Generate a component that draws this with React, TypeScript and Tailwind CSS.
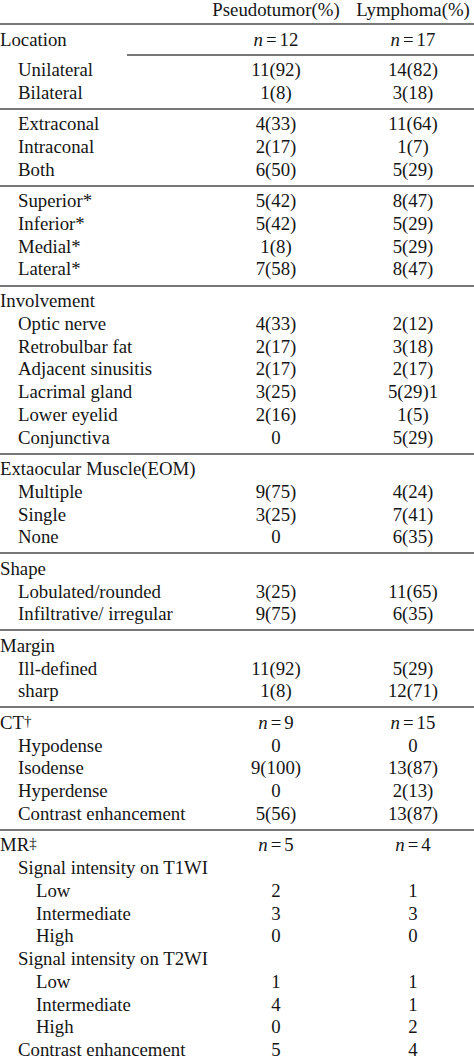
type Row = { label: React.ReactNode; a?: React.ReactNode; b?: React.ReactNode; indent?: 0 | 1 | 2 };

const N = ({ v }: { v: number }) => (
  <span>
    <i>n</i>
    <span className="mx-[3px]">=</span>
    {v}
  </span>
);

const groups: Row[][] = [
  [
    { label: "Extraconal", a: "4(33)", b: "11(64)", indent: 1 },
    { label: "Intraconal", a: "2(17)", b: "1(7)", indent: 1 },
    { label: "Both", a: "6(50)", b: "5(29)", indent: 1 },
  ],
  [
    { label: "Superior*", a: "5(42)", b: "8(47)", indent: 1 },
    { label: "Inferior*", a: "5(42)", b: "5(29)", indent: 1 },
    { label: "Medial*", a: "1(8)", b: "5(29)", indent: 1 },
    { label: "Lateral*", a: "7(58)", b: "8(47)", indent: 1 },
  ],
  [
    { label: "Involvement" },
    { label: "Optic nerve", a: "4(33)", b: "2(12)", indent: 1 },
    { label: "Retrobulbar fat", a: "2(17)", b: "3(18)", indent: 1 },
    { label: "Adjacent sinusitis", a: "2(17)", b: "2(17)", indent: 1 },
    { label: "Lacrimal gland", a: "3(25)", b: "5(29)1", indent: 1 },
    { label: "Lower eyelid", a: "2(16)", b: "1(5)", indent: 1 },
    { label: "Conjunctiva", a: "0", b: "5(29)", indent: 1 },
  ],
  [
    { label: "Extaocular Muscle(EOM)" },
    { label: "Multiple", a: "9(75)", b: "4(24)", indent: 1 },
    { label: "Single", a: "3(25)", b: "7(41)", indent: 1 },
    { label: "None", a: "0", b: "6(35)", indent: 1 },
  ],
  [
    { label: "Shape" },
    { label: "Lobulated/rounded", a: "3(25)", b: "11(65)", indent: 1 },
    { label: "Infiltrative/ irregular", a: "9(75)", b: "6(35)", indent: 1 },
  ],
  [
    { label: "Margin" },
    { label: "Ill-defined", a: "11(92)", b: "5(29)", indent: 1 },
    { label: "sharp", a: "1(8)", b: "12(71)", indent: 1 },
  ],
  [
    {
      label: (
        <span>
          CT<sup className="text-[15px] relative -top-[3px]">†</sup>
        </span>
      ),
      a: <N v={9} />,
      b: <N v={15} />,
    },
    { label: "Hypodense", a: "0", b: "0", indent: 1 },
    { label: "Isodense", a: "9(100)", b: "13(87)", indent: 1 },
    { label: "Hyperdense", a: "0", b: "2(13)", indent: 1 },
    { label: "Contrast enhancement", a: "5(56)", b: "13(87)", indent: 1 },
  ],
  [
    {
      label: (
        <span>
          MR<sup className="text-[15px] relative -top-[3px]">‡</sup>
        </span>
      ),
      a: <N v={5} />,
      b: <N v={4} />,
    },
    { label: "Signal intensity on T1WI", indent: 1 },
    { label: "Low", a: "2", b: "1", indent: 2 },
    { label: "Intermediate", a: "3", b: "3", indent: 2 },
    { label: "High", a: "0", b: "0", indent: 2 },
    { label: "Signal intensity on T2WI", indent: 1 },
    { label: "Low", a: "1", b: "1", indent: 2 },
    { label: "Intermediate", a: "4", b: "1", indent: 2 },
    { label: "High", a: "0", b: "2", indent: 2 },
    { label: "Contrast enhancement", a: "5", b: "4", indent: 1 },
  ],
];

function TRow({ label, a, b, indent = 0 }: Row) {
  const pad = indent === 2 ? "pl-[36px]" : indent === 1 ? "pl-[18px]" : "pl-0";
  return (
    <div className="grid grid-cols-[200px_152px_122px] h-[22.75px] leading-[22.75px] whitespace-nowrap">
      <div className={pad}>{label}</div>
      <div className="text-center">{a}</div>
      <div className="text-center">{b}</div>
    </div>
  );
}

const Rule = () => <div className="h-[2px] bg-[#777777]" />;

export default function App() {
  return (
    <div
      className="w-[474px] h-[1060px] overflow-hidden bg-white text-[#151515] text-[18.8px]"
      style={{ fontFamily: '"Liberation Serif", "Times New Roman", serif' }}
    >
      {/* header */}
      <div className="grid grid-cols-[200px_152px_122px] h-[19.8px] leading-[19.8px] mb-[3.6px] whitespace-nowrap">
        <div />
        <div className="text-center">Pseudotumor(%)</div>
        <div className="text-center">Lymphoma(%)</div>
      </div>
      <Rule />

      {/* location block */}
      <div className="py-[3.4px]">
        <TRow label="Location" a={<N v={12} />} b={<N v={17} />} />
        <div className="ml-[127px] my-[2.7px] h-[2px] bg-[#777777]" />
        <TRow label="Unilateral" a="11(92)" b="14(82)" indent={1} />
        <TRow label="Bilateral" a="1(8)" b="3(18)" indent={1} />
      </div>

      {groups.map((g, i) => (
        <div key={i}>
          <Rule />
          <div className="py-[3.4px]">
            {g.map((r, j) => (
              <TRow key={j} {...r} />
            ))}
          </div>
        </div>
      ))}
    </div>
  );
}
